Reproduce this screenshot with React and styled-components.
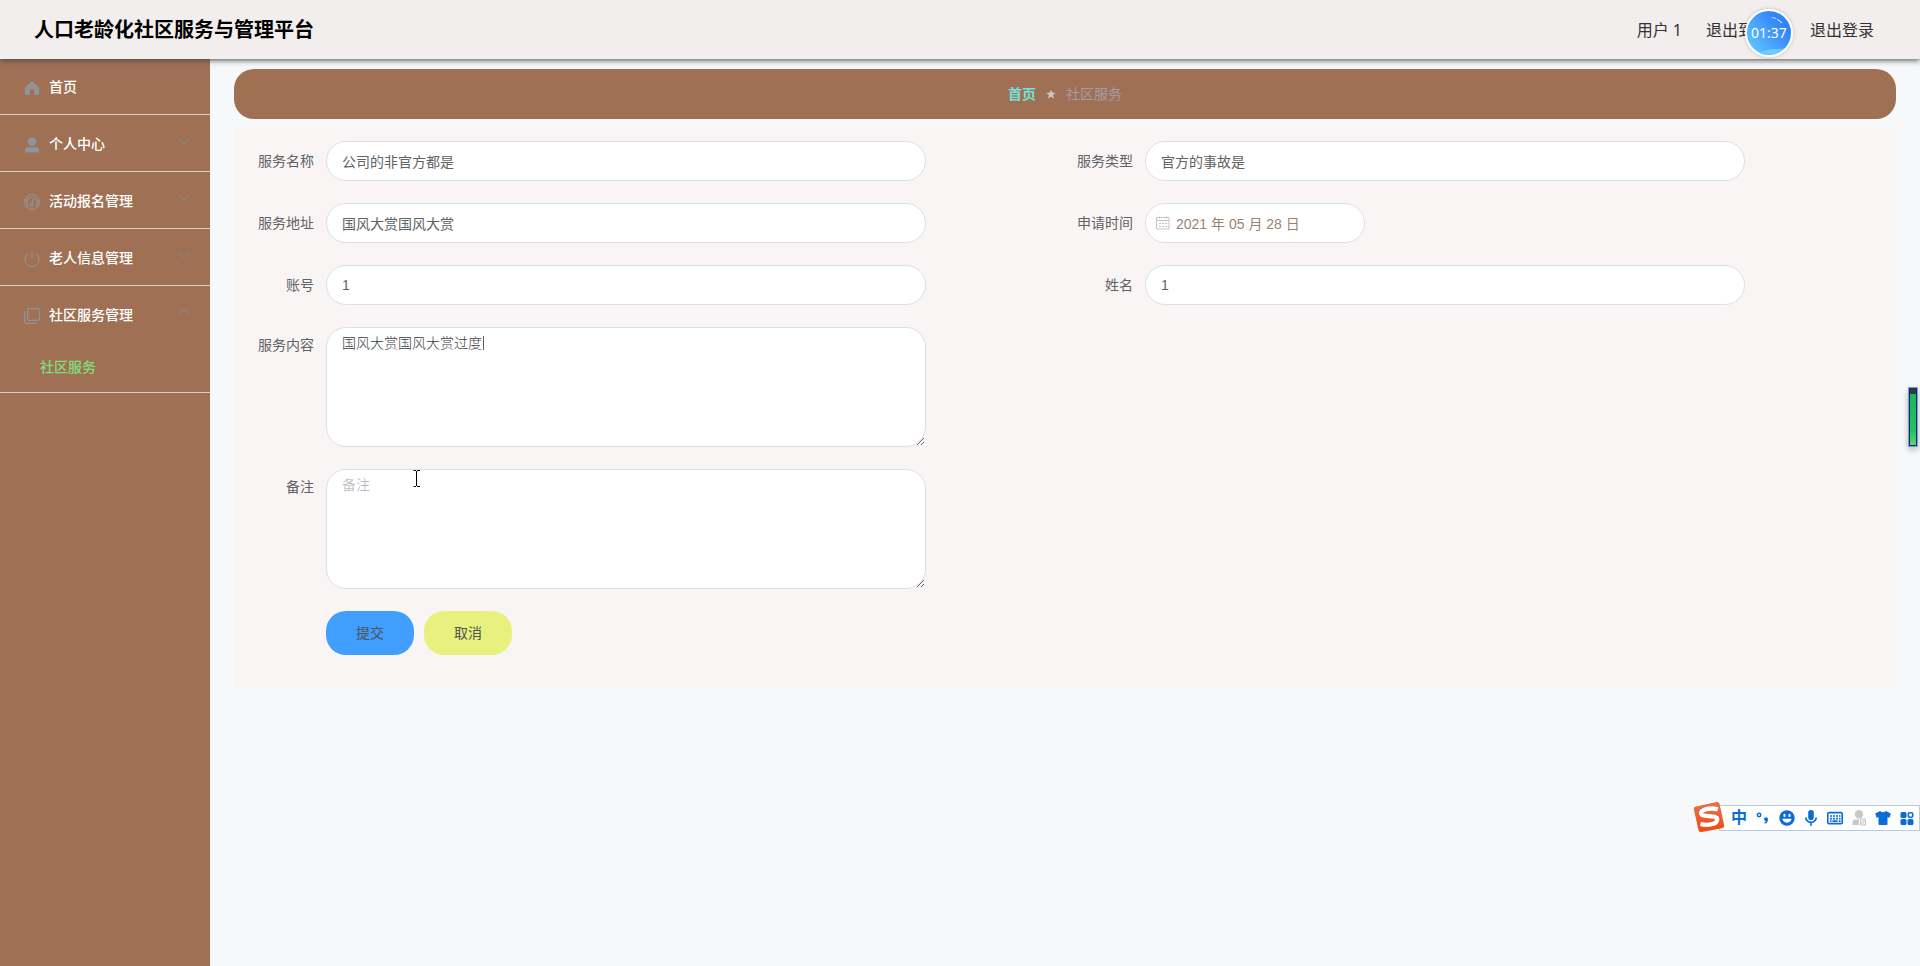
import { useState } from "react";
import styled, { createGlobalStyle } from "styled-components";

const menu = [
    { name: "首页", icon: "home" },
    { name: "个人中心", icon: "user", children: ["个人信息"] },
    { name: "活动报名管理", icon: "gauge", children: ["活动报名"] },
    { name: "老人信息管理", icon: "power", children: ["老人信息"] },
    { name: "社区服务管理", icon: "copy", children: ["社区服务"] },
];

const icons = {
    home: <path d="M8 1.2 15 7.4V14a1 1 0 0 1-1 1H10.4V11.6a2.4 2.4 0 0 0-4.8 0V15H2a1 1 0 0 1-1-1V7.4Z" fill="currentColor" />,
    user: (
        <g fill="currentColor">
            <circle cx="8" cy="4.6" r="4.3" />
            <path d="M1 15.4v-2.200a3 3 0 0 1 3-3h8a3 3 0 0 1 3 3v2.200Z" />
        </g>
    ),
    gauge: (
        <g fill="none" stroke="currentColor" strokeWidth="1.2">
            <circle cx="8" cy="8" r="7.3" />
            <path d="M4.200 12A5.200 5.200 0 1 1 11.800 12" />
            <circle cx="7.500" cy="11" r="1.500" />
            <path d="M8 9.500 9.200 4.800" />
        </g>
    ),
    power: (
        <g fill="none" stroke="currentColor" strokeWidth="1.1">
            <path d="M4.600 2.400a7 7 0 1 0 6.800 0" />
            <path d="M8 .6V7" />
        </g>
    ),
    copy: (
        <g fill="none" stroke="currentColor" strokeWidth="1.2">
            <rect x="3.600" y=".7" width="11.700" height="11.700" rx="1.600" />
            <path d="M.7 3.600v10.200a1.600 1.600 0 0 0 1.600 1.600h10.200" />
        </g>
    ),
};

const Icon = ({ name }) => (
    <MenuIcon viewBox="0 0 16 16" aria-hidden="true">{icons[name]}</MenuIcon>
);

const Field = ({ id, label, value, onChange }) => (
    <FormItem>
        <Label htmlFor={id}>{label}</Label>
        <Input id={id} value={value} onChange={onChange} />
    </FormItem>
);

const ImeBar = () => (
    <Ime>
        <ImeLogo viewBox="0 0 32 32" aria-hidden="true">
            <defs>
                <linearGradient id="logo" x1="0" y1="0" x2="0" y2="1">
                    <stop offset="0" stopColor="#e5734f" />
                    <stop offset="1" stopColor="#f04a10" />
                </linearGradient>
            </defs>
            <path d="M3 5.500Q.4 6 .9 8.500L5.400 28.800Q6 31.400 8.600 31L29 27.200Q31.600 26.700 31.100 24L26.600 3Q26 .6 23.500 1.100Z" fill="url(#logo)" />
            <path d="M24.800 8.400C17 6 7.500 8.600 8.200 12.600C9 16.600 23.800 13.600 24.200 18.200C24.600 23 15 25.200 7.400 23" fill="none" stroke="#fff" strokeWidth="4.400" />
        </ImeLogo>
        <ImeButton aria-label="中文输入">中</ImeButton>
        <ImeButton aria-label="标点">
            <svg width="16" height="16" viewBox="0 0 16 16" aria-hidden="true">
                <circle cx="4" cy="5" r="1.700" fill="none" stroke="currentColor" strokeWidth="1.500" />
                <path d="M9 9.200a2 2 0 0 1 4 0q0 3.500-3.300 4.600l-.4-1.100q1.400-.6 1.500-1.600A2 2 0 0 1 9 9.200Z" fill="currentColor" />
            </svg>
        </ImeButton>
        <ImeButton aria-label="表情">
            <svg width="16" height="16" viewBox="0 0 16 16" aria-hidden="true">
                <circle cx="8" cy="8" r="7.700" fill="currentColor" />
                <rect x="4.500" y="3.800" width="2" height="3.200" rx="1" fill="#fff" />
                <rect x="9.500" y="3.800" width="2" height="3.200" rx="1" fill="#fff" />
                <path d="M3.500 8.800h9a4.500 3.900 0 0 1-9 0Z" fill="#fff" />
            </svg>
        </ImeButton>
        <ImeButton aria-label="语音">
            <svg width="16" height="16" viewBox="0 0 16 16" aria-hidden="true">
                <rect x="5.200" y="0" width="5.600" height="10" rx="2.800" fill="currentColor" />
                <path d="M2.800 7.500a5.200 4.800 0 0 0 10.400 0M8 12.500v3.300" fill="none" stroke="currentColor" strokeWidth="1.700" />
            </svg>
        </ImeButton>
        <ImeButton aria-label="软键盘">
            <svg width="16" height="16" viewBox="0 0 16 16" aria-hidden="true">
                <rect x=".8" y="2.600" width="14.400" height="11" rx="1.200" fill="#fff" stroke="currentColor" strokeWidth="1.600" />
                <path d="M3 6h2M6 6h2M9 6h2M12 6h1.500M3 8.600h2M6 8.600h2M9 8.600h2M12 8.600h1.500M3 11.200h1.500M5.500 11.200h5M11.700 11.200h1.800" stroke="currentColor" strokeWidth="1.700" />
            </svg>
        </ImeButton>
        <ImeButton aria-label="账户" $muted>
            <svg width="16" height="16" viewBox="0 0 16 16" aria-hidden="true">
                <circle cx="8" cy="4.300" r="4.200" fill="currentColor" />
                <path d="M1.500 15v-2.500a3 3 0 0 1 3-3H8V15Z" fill="currentColor" />
                <rect x="9" y="8.500" width="6" height="7" fill="currentColor" />
                <path d="M14 10h-3.500v2h3v2H10" fill="none" stroke="#fff" strokeWidth=".9" />
            </svg>
        </ImeButton>
        <ImeButton aria-label="皮肤">
            <svg width="16" height="16" viewBox="0 0 16 16" aria-hidden="true">
                <path d="M5 1Q8 3.600 11 1L15.800 3.500 14.400 7.800 12.500 7.200V14a1 1 0 0 1-1 1h-7a1 1 0 0 1-1-1V7.200l-1.900.6L.2 3.500Z" fill="currentColor" />
            </svg>
        </ImeButton>
        <ImeButton aria-label="工具箱">
            <svg width="16" height="16" viewBox="0 0 16 16" aria-hidden="true">
                <rect x="1.500" y="2" width="6" height="6" rx="1.500" fill="currentColor" />
                <rect x="1.500" y="9" width="6" height="6" rx="1.500" fill="currentColor" />
                <rect x="8.500" y="9" width="6" height="6" rx="1.500" fill="currentColor" />
                <rect x="9.300" y="2.800" width="4.400" height="4.400" rx="1.200" fill="none" stroke="currentColor" strokeWidth="1.600" />
            </svg>
        </ImeButton>
    </Ime>
);

const App = () => {
    const [opened, setOpened] = useState("社区服务管理");
    const [form, setForm] = useState({
        name: "公司的非官方都是",
        type: "官方的事故是",
        address: "国风大赏国风大赏",
        date: "2021 年 05 月 28 日",
        account: "1",
        person: "1",
        content: "国风大赏国风大赏过度",
        remark: "",
    });

    const change = (key) => (e) => setForm({ ...form, [key]: e.target.value });

    return (
        <Wrapper>
            <GlobalStyle />
            <Header>
                <h1>人口老龄化社区服务与管理平台</h1>
                <UserNav>
                    <span>用户 1</span>
                    <a href="#front">退出到前台</a>
                    <a href="#logout">退出登录</a>
                </UserNav>
                <Timer>
                    <svg viewBox="0 0 44 44" aria-hidden="true">
                        <path d="M12 42Q20 38 28 38T37 37Q32 44 22 44 16 44 12 42Z" fill="#6fcbff" />
                        <path d="M25 6.500l4 1M30 8l5 4" stroke="#b9dcff" strokeWidth="1.200" fill="none" />
                    </svg>
                    <span>01:37</span>
                </Timer>
            </Header>
            <Body>
                <Sidebar>
                    {menu.map((item) => (
                        <MenuGroup key={item.name}>
                            {item.children ? (
                                <MenuButton
                                    type="button"
                                    aria-expanded={opened === item.name}
                                    onClick={() => setOpened(opened === item.name ? "" : item.name)}
                                >
                                    <Icon name={item.icon} />
                                    <span>{item.name}</span>
                                    <Arrow viewBox="0 0 12 12" $up={opened === item.name} aria-hidden="true">
                                        <path d="M1.500 4 6 8.500 10.500 4" fill="none" stroke="currentColor" strokeWidth="1.200" />
                                    </Arrow>
                                </MenuButton>
                            ) : (
                                <MenuButton as="a" href="#home">
                                    <Icon name={item.icon} />
                                    <span>{item.name}</span>
                                </MenuButton>
                            )}
                            {opened === item.name && item.children.map((child) => (
                                <SubLink key={child} href="#service">{child}</SubLink>
                            ))}
                        </MenuGroup>
                    ))}
                </Sidebar>
                <Main>
                    <Breadcrumb>
                        <a href="#home">首页</a>
                        <svg width="10" height="10" viewBox="0 0 10 10" aria-hidden="true">
                            <path d="M5 .5 6.300 3.600 9.800 3.900 7.100 6.100 8 9.500 5 7.700 2 9.500 2.900 6.100.2 3.900 3.700 3.600Z" fill="#c8c6ca" />
                        </svg>
                        <span>社区服务</span>
                    </Breadcrumb>
                    <Form onSubmit={(e) => e.preventDefault()}>
                        <Field id="name" label="服务名称" value={form.name} onChange={change("name")} />
                        <Field id="type" label="服务类型" value={form.type} onChange={change("type")} />
                        <Field id="address" label="服务地址" value={form.address} onChange={change("address")} />
                        <FormItem>
                            <Label htmlFor="date">申请时间</Label>
                            <DateBox>
                                <svg width="14" height="14" viewBox="0 0 14 14" aria-hidden="true">
                                    <path d="M.5 1.500h12.500v11.500H.5ZM.5 4.500h12.500M3.500.5v2M10.500.5v2" fill="none" stroke="currentColor" />
                                    <path d="M3 7.500h8M3 10.500h8" stroke="currentColor" strokeDasharray="2 1" />
                                </svg>
                                <DateInput id="date" value={form.date} onChange={change("date")} />
                            </DateBox>
                        </FormItem>
                        <Field id="account" label="账号" value={form.account} onChange={change("account")} />
                        <Field id="person" label="姓名" value={form.person} onChange={change("person")} />
                        <FormItem $full>
                            <Label htmlFor="content" $area>服务内容</Label>
                            <AreaBox>
                                <TextArea id="content" value={form.content} onChange={change("content")} />
                                <Caret />
                            </AreaBox>
                        </FormItem>
                        <FormItem $full>
                            <Label htmlFor="remark" $area>备注</Label>
                            <AreaBox>
                                <TextArea id="remark" placeholder="备注" value={form.remark} onChange={change("remark")} />
                                <Pointer viewBox="0 0 8 17" aria-hidden="true">
                                    <path d="M.5.500H3M4 .500h3M.5 16.500H3M4 16.500h3M3.500 1v15" stroke="#000" fill="none" />
                                </Pointer>
                            </AreaBox>
                        </FormItem>
                        <Actions>
                            <Button type="submit" $color="#409eff">提交</Button>
                            <Button type="button" $color="#e8f17d">取消</Button>
                        </Actions>
                    </Form>
                </Main>
            </Body>
            <Gadget />
            <ImeBar />
        </Wrapper>
    );
}

const GlobalStyle = createGlobalStyle`
    * {
        box-sizing: border-box;
    }

    body {
        margin: 0;
        background: #f7f8fa;
        color: #606266;
        font: 14px/20px "Liberation Sans", "Noto Sans CJK SC", sans-serif;
    }

    a {
        text-decoration: none;
    }

    button, input, textarea {
        font: inherit;
    }
`

const Wrapper = styled.div`
    position: relative;
    display: flex;
    flex-direction: column;
    min-height: 100vh;
    overflow: hidden;
`

const Header = styled.header`
    position: relative;
    z-index: 1;
    display: flex;
    align-items: center;
    justify-content: space-between;
    height: 59px;
    padding: 0 46px 0 34px;
    background: #f3eeee;
    box-shadow: 0 1px 6px #444;

    h1 {
        margin: 0;
        color: #000;
        font-size: 20px;
        line-height: 28px;
    }
`

const UserNav = styled.nav`
    display: flex;
    gap: 24px;
    color: #333;
    font: 16px/24px "Noto Sans", "Noto Sans CJK SC", sans-serif;

    a {
        color: inherit;
    }
`

/* floating recorder clock over the header */
const Timer = styled.div`
    position: absolute;
    top: 9px;
    right: 127px;
    display: grid;
    place-items: center;
    width: 48px;
    height: 48px;
    border: 2px solid #fff;
    border-radius: 50%;
    background: linear-gradient(50deg, #5cc0fd 15%, #3384fb 75%);
    box-shadow: 0 0 4px rgba(0, 0, 0, .2);
    color: #fff;
    font: 14px/20px "Noto Sans", sans-serif;

    svg, span {
        grid-area: 1 / 1;
    }
`

const Body = styled.div`
    display: flex;
    flex: 1;
`

const Sidebar = styled.nav`
    flex: 0 0 210px;
    margin-top: -1px;
    background: #9f7054;
`

const MenuGroup = styled.div`
    border-bottom: 1px solid #dccfc8;
`

const MenuButton = styled.button`
    display: flex;
    align-items: center;
    gap: 9px;
    width: 100%;
    height: 56px;
    padding: 2px 20px 0 24px;
    border: 0;
    background: none;
    color: #fff;
    font-weight: 500;
    text-align: left;
    cursor: pointer;

    span {
        flex: 1;
    }
`

const MenuIcon = styled.svg`
    width: 16px;
    height: 16px;
    margin-top: 2px;
    color: #909399;
`

const Arrow = styled.svg`
    width: 12px;
    height: 12px;
    margin-bottom: 6px;
    color: #8c827e;
    transform: ${({ $up }) => ($up ? "rotate(180deg)" : "none")};
`

const SubLink = styled.a`
    display: block;
    padding-left: 40px;
    color: #7fdf7f;
    font-weight: 500;
    line-height: 50px;
`

const Main = styled.main`
    flex: 1;
    padding: 10px 24px;
`

const Breadcrumb = styled.nav`
    display: flex;
    align-items: center;
    justify-content: center;
    gap: 10px;
    height: 50px;
    margin-bottom: 9px;
    border-radius: 20px;
    background: #9f7054;
    color: #a69ca6;

    a {
        color: #71e3dc;
        font-weight: 700;
    }
`

const Form = styled.form`
    display: grid;
    grid-template-columns: 1fr 1fr;
    row-gap: 22px;
    padding: 13px 12px 33px;
    background: #f9f5f5;
`

const FormItem = styled.div`
    display: flex;
    align-items: flex-start;
    grid-column: ${({ $full }) => ($full ? "1 / -1" : "auto")};
`

const Label = styled.label`
    flex: 0 0 80px;
    padding-right: 12px;
    line-height: ${({ $area }) => ($area ? "36px" : "40px")};
    text-align: right;
`

const Input = styled.input`
    width: 600px;
    height: 40px;
    padding: 0 15px;
    border: 1px solid #dcdfe6;
    border-radius: 20px;
    outline: 0;
    background: #fff;
    color: #606266;
`

const DateBox = styled.div`
    position: relative;

    svg {
        position: absolute;
        top: 13px;
        left: 11px;
        color: #c0c4cc;
    }
`

const DateInput = styled(Input)`
    width: 220px;
    padding: 0 30px;
    color: #9f7f70;
`

const AreaBox = styled.div`
    position: relative;
    display: flex;
`

const TextArea = styled.textarea`
    width: 600px;
    height: 120px;
    padding: 5px 15px;
    border: 1px solid #dcdfe6;
    border-radius: 20px;
    outline: 0;
    background: #fff;
    color: #3c3e42;
    font-weight: 300;
    line-height: 21px;
    resize: vertical;

    &::placeholder {
        color: #a9adb5;
    }
`

const Caret = styled.i`
    position: absolute;
    top: 9px;
    left: 157px;
    width: 1px;
    height: 14px;
    background: #606266;
`

const Pointer = styled.svg`
    position: absolute;
    top: 1px;
    left: 87px;
    width: 8px;
    height: 17px;
`

const Actions = styled.div`
    display: flex;
    gap: 10px;
    padding-left: 80px;
`

const Button = styled.button`
    width: 88px;
    height: 44px;
    border: 0;
    border-radius: 20px;
    background: ${({ $color }) => $color};
    color: #4f5256;
    cursor: pointer;
`

const Gadget = styled.div`
    position: absolute;
    top: 387px;
    right: 2px;
    width: 10px;
    height: 60px;
    border: 2px solid #19265e;
    border-radius: 2px;
    outline: 1px solid #6fa8e0;
    outline-offset: -1px;
    background: linear-gradient(#343a40 5px, #19b75a 5px, #22c25f 75%, #5fd66e);
    box-shadow: 0 3px 6px rgba(0, 0, 0, .25);
`

const Ime = styled.div`
    position: absolute;
    top: 805px;
    right: 0;
    display: flex;
    align-items: center;
    height: 26px;
    padding-left: 7px;
    border: 1px solid #b5cbe6;
    background: #fff;
`

const ImeLogo = styled.svg`
    position: absolute;
    top: -5px;
    left: -27px;
    width: 32px;
    height: 32px;
`

const ImeButton = styled.button`
    display: grid;
    place-items: center;
    width: 24px;
    height: 24px;
    padding: 0;
    border: 0;
    background: none;
    color: ${({ $muted }) => ($muted ? "#c8c8c8" : "#0a6cd6")};
    font-size: 16px;
    font-weight: 700;
`

export default App;
